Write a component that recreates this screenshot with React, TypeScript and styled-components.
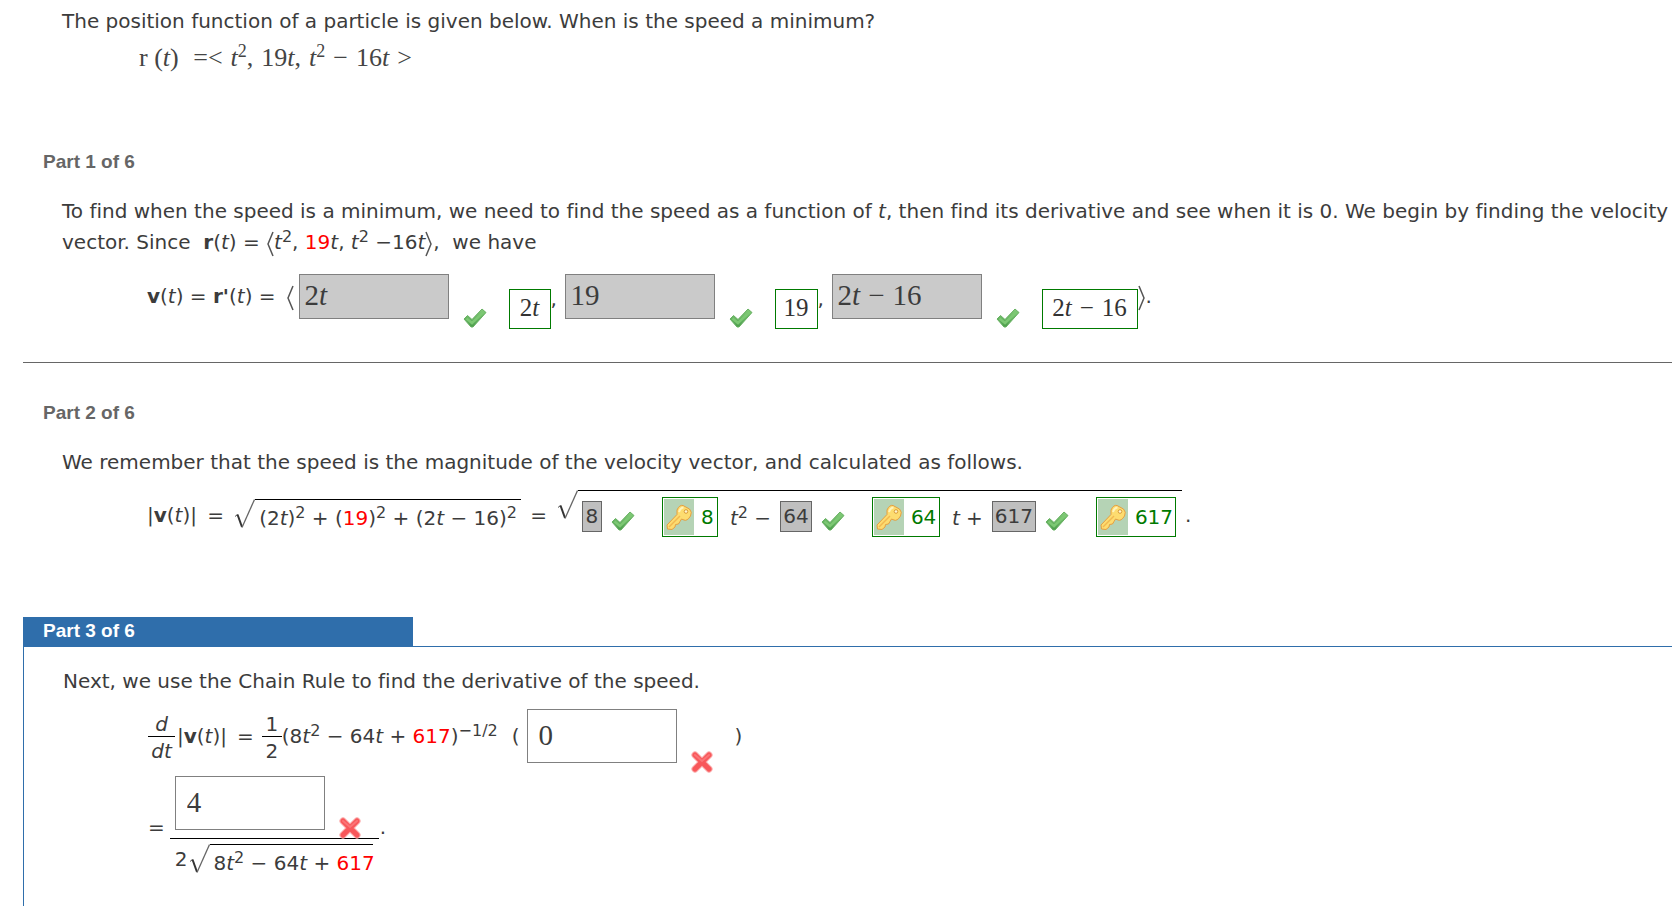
import React from "react";
import styled, { createGlobalStyle } from "styled-components";

const sans = '"DejaVu Sans", Verdana, sans-serif';
const serif = '"Liberation Serif", "Times New Roman", serif';
const ink = "#3c3c3c";

const GlobalStyle = createGlobalStyle`
  * { box-sizing: border-box; }
  body { margin: 0; background: #fff; color: ${ink}; font: 20px/30px ${sans}; font-variant-ligatures: none; }
`;

const Page = styled.main`
  min-height: 100vh;
  overflow-x: hidden;
`;

const Intro = styled.header`
  min-height: 134px;
  padding: 6px 24px 0 62px;
`;

const Given = styled.div`
  margin-top: 7px;
  padding-left: 77px;
  color: #444;
  font: 26px/30px ${serif};
  white-space: pre;
`;

const DoneSection = styled.section<{ $height: number; $ruled?: boolean }>`
  min-height: ${(p) => p.$height}px;
  margin-left: 23px;
  padding: ${(p) => (p.$ruled ? 13 : 35)}px 0 0 20px;
  border-bottom: ${(p) => (p.$ruled ? "1px solid #666" : "none")};
`;

const Heading = styled.h2`
  margin: 0;
  color: #666;
  font: bold 19px/30px "Liberation Sans", Arial, sans-serif;
`;

const Paragraph = styled.p`
  margin: 0;
  padding: 19px 0 0 19px;
  line-height: 31px;
`;

const Row = styled.div<{ $top: number }>`
  display: flex;
  align-items: flex-start;
  padding: ${(p) => p.$top}px 0 0 104px;
  white-space: pre;
`;

const Part = styled.span<{ $top?: number; $gap?: number; $width?: number }>`
  margin-top: ${(p) => p.$top ?? 0}px;
  margin-left: ${(p) => p.$gap ?? 0}px;
  width: ${(p) => (p.$width ? `${p.$width}px` : "auto")};
  white-space: pre;
  flex: none;
`;

const Red = styled.span`
  color: #f00;
`;

const Sup = styled.sup`
  font-size: 16px;
  line-height: 0;
  vertical-align: 7px;
`;

const SerifSup = styled(Sup)`
  font-size: 18px;
  vertical-align: 9px;
`;

const Op = styled.span`
  margin: 0 8px;
`;

const Comma = styled.span`
  margin-right: 8px;
`;

const MathEntry = styled.output`
  display: block;
  flex: none;
  width: 150px;
  height: 45px;
  padding: 0 5px;
  border: 1px solid #808080;
  background: #cacaca;
  font: 29px/40px ${serif};
`;

const MathInput = styled.input`
  display: block;
  flex: none;
  width: 150px;
  height: 54px;
  padding: 0 11px 2px;
  border: 1px solid #808080;
  border-radius: 0;
  background: #fff;
  color: ${ink};
  font: 29px/50px ${serif};
`;

const KeyBox = styled.span<{ $width: number }>`
  display: flex;
  flex: none;
  justify-content: center;
  width: ${(p) => p.$width}px;
  height: 40px;
  border: 1px solid #007a00;
  color: #333;
  font: 25px/36px ${serif};
`;

const NumberEntry = styled.output<{ $width: number }>`
  display: block;
  flex: none;
  width: ${(p) => p.$width}px;
  height: 31px;
  border: 1px solid #666;
  background: #bfbfbf;
  line-height: 29px;
  text-align: center;
`;

const KeyAnswer = styled.span<{ $width: number }>`
  display: flex;
  flex: none;
  width: ${(p) => p.$width}px;
  height: 40px;
  padding: 1px;
  border: 1px solid #007a00;
  color: #007a00;
  line-height: 36px;
`;

const KeyPanel = styled.span`
  display: flex;
  align-items: center;
  justify-content: center;
  width: 30px;
  margin-right: 7px;
  background: #b5d3b5;
`;

const Mark = styled.span<{ $top: number; $left: number; $right: number }>`
  display: block;
  flex: none;
  margin: ${(p) => `${p.$top}px ${p.$right}px 0 ${p.$left}px`};
  line-height: 0;
`;

const Root = styled.span<{ $top?: number; $gap?: number }>`
  display: flex;
  flex: none;
  margin-top: ${(p) => p.$top ?? 0}px;
  margin-left: ${(p) => p.$gap ?? 0}px;
`;

const Radicand = styled.span<{ $width: number }>`
  display: flex;
  align-items: flex-start;
  width: ${(p) => p.$width}px;
  border-top: 1px solid #000;
  white-space: pre;
`;

const Fraction = styled.span<{ $width: number }>`
  display: flex;
  flex: none;
  flex-direction: column;
  width: ${(p) => p.$width}px;
  padding-top: 4px;
  text-align: center;
  line-height: 28px;
`;

const Numerator = styled.span`
  border-bottom: 1px solid #000;
  line-height: 23px;
`;

const ActiveSection = styled.section`
  margin-left: 23px;
`;

const Tab = styled.h2`
  width: 390px;
  height: 29px;
  margin: 0;
  padding-left: 20px;
  background: #2f6eab;
  color: #fff;
  font: bold 19px/28px "Liberation Sans", Arial, sans-serif;
`;

const ActiveBody = styled.div`
  min-height: 260px;
  padding: 19px 0 0 20px;
  border-top: 1px solid #2f6eab;
  border-left: 1px solid #2f6eab;
`;

const FlushParagraph = styled(Paragraph)`
  padding-top: 0;
`;

const Quotient = styled.span`
  display: flex;
  flex: none;
  flex-direction: column;
  width: 209px;
  margin-left: 5px;
`;

const QuotientTop = styled.span`
  display: flex;
  height: 63px;
  padding-left: 5px;
  border-bottom: 1px solid #000;
`;

const QuotientBottom = styled.span`
  display: flex;
  padding: 5px 0 0 5px;
`;

function Check() {
  return (
    <svg width="24" height="20" viewBox="0 0 24 20" role="img" aria-label="Correct">
      <defs>
        <linearGradient id="check" x1="0" y1="0" x2="0" y2="1">
          <stop offset="0" stopColor="#86cc7c" />
          <stop offset="1" stopColor="#4a9c4b" />
        </linearGradient>
      </defs>
      <path d="M1 11 L4.500 7.500 L9 11.500 L19 1 L23 4.500 L10 19 L8 19 Z" fill="url(#check)" stroke="#68b262" strokeWidth="1" strokeLinejoin="round" />
      <path d="M3.500 10.500 L9 15 L20.500 4" fill="none" stroke="#7cc873" strokeWidth="2.500" />
    </svg>
  );
}

function Cross() {
  return (
    <svg width="22" height="22" viewBox="0 0 22 22" role="img" aria-label="Incorrect">
      <path d="M4 4 L18 18 M18 4 L4 18" stroke="#fba5a5" strokeWidth="7" strokeLinecap="round" />
      <path d="M4 4 L18 18 M18 4 L4 18" stroke="#f8575a" strokeWidth="5" strokeLinecap="round" />
      <path d="M4 4 L11 10 L18 4" fill="none" stroke="#fb7476" strokeWidth="2" strokeLinecap="round" />
    </svg>
  );
}

function KeyIcon() {
  return (
    <svg width="26" height="26" viewBox="0 0 26 26" aria-hidden="true">
      <path
        d="M11 6 Q13.500 0.500 17 1.500 L23.500 5 Q26.500 8 24.500 12 Q21 17.500 18 16 L15.500 15 L14 17.500 L12.500 20 L9.500 20.500 L9 23 L6 25.500 L1.500 25 L1 21 L11 10.500 Z"
        fill="#fddc70" stroke="#e59f40" strokeWidth="1" strokeLinejoin="round"
      />
      <path d="M3 23 L14 12" stroke="#f2b850" strokeWidth="1.500" />
      <path d="M13 8 Q14.500 3.500 17.500 3.500" fill="none" stroke="#fff3bd" strokeWidth="2" />
      <circle cx="20" cy="7.500" r="1.800" fill="#fff6d0" stroke="#d99a38" strokeWidth="1" />
    </svg>
  );
}

function Radical() {
  return (
    <svg width="21" height="30" viewBox="0 0 21 30" aria-hidden="true">
      <path d="M1 17.500 L3.500 15.500" fill="none" stroke="#555" strokeWidth="1" />
      <path d="M3.500 15.500 L8 28" fill="none" stroke="#333" strokeWidth="2" />
      <path d="M8 28.500 L20.500 0.500" fill="none" stroke="#666" strokeWidth="1.300" />
    </svg>
  );
}

function Angle({ close }: { close?: boolean }) {
  return (
    <svg width="8" height="26" viewBox="0 0 8 26" aria-hidden="true">
      <path d={close ? "M1 1 L6 13 L1 25" : "M7 1 L2 13 L7 25"} fill="none" stroke="#555" strokeWidth="1.500" />
    </svg>
  );
}

const InlineAngle = styled.span`
  display: inline-block;
  width: 8px;
  height: 26px;
  line-height: 0;
  vertical-align: -8px;
`;

export default function App() {
  return (
    <Page>
      <GlobalStyle />
      <Intro>
        <div>The position function of a particle is given below. When is the speed a minimum?</div>
        <Given>
          r (<i>t</i>) <Op>=&lt;</Op><i>t</i><SerifSup>2</SerifSup><Comma>,</Comma>19<i>t</i><Comma>,</Comma><i>t</i><SerifSup>2</SerifSup><Op>−</Op>16<i>t</i><Op>&gt;</Op>
        </Given>
      </Intro>

      <DoneSection $height={229} $ruled>
        <Heading>Part 1 of 6</Heading>
        <Paragraph>
          To find when the speed is a minimum, we need to find the speed as a function of <i>t</i>, then find its
          derivative and see when it is 0. We begin by finding the velocity vector. Since&nbsp; <b>r</b>(<i>t</i>) ={" "}
          <InlineAngle><Angle /></InlineAngle><i>t</i><Sup>2</Sup>, <Red>19</Red><i>t</i>, <i>t</i><Sup>2</Sup> −16<i>t</i>
          <InlineAngle><Angle close /></InlineAngle>,&nbsp; we have
        </Paragraph>
        <Row $top={16}>
          <Part $top={7}><b>v</b>(<i>t</i>) = <b>r'</b>(<i>t</i>) =</Part>
          <Part $top={11} $gap={10} $width={13}><Angle /></Part>
          <MathEntry>2<i>t</i></MathEntry>
          <Mark $top={34} $left={14} $right={22}><Check /></Mark>
          <Part $top={15}><KeyBox $width={42}><span>2<i>t</i></span></KeyBox></Part>
          <Part $top={10} $width={14}>,</Part>
          <MathEntry>19</MathEntry>
          <Mark $top={34} $left={14} $right={22}><Check /></Mark>
          <Part $top={15}><KeyBox $width={43}>19</KeyBox></Part>
          <Part $top={10} $width={14}>,</Part>
          <MathEntry>2<i>t</i><Op>−</Op>16</MathEntry>
          <Mark $top={34} $left={14} $right={22}><Check /></Mark>
          <Part $top={15}><KeyBox $width={96}><span>2<i>t</i><Op>−</Op>16</span></KeyBox></Part>
          <Part $top={11}><Angle close /></Part>
          <Part $top={7}>.</Part>
        </Row>
      </DoneSection>

      <DoneSection $height={254}>
        <Heading>Part 2 of 6</Heading>
        <Paragraph>We remember that the speed is the magnitude of the velocity vector, and calculated as follows.</Paragraph>
        <Row $top={12}>
          <Part $top={10}>|<b>v</b>(<i>t</i>)| </Part>
          <Part $top={10} $gap={4}>=</Part>
          <Root $top={9} $gap={10}>
            <Radical />
            <Radicand $width={266}>
              <Part $top={3} $gap={4}>(2<i>t</i>)<Sup>2</Sup> + (<Red>19</Red>)<Sup>2</Sup> + (2<i>t</i> − 16)<Sup>2</Sup></Part>
            </Radicand>
          </Root>
          <Part $top={10} $gap={9}>=</Part>
          <Root $gap={10}>
            <Radical />
            <Radicand $width={604}>
              <Part $top={10} $gap={4}><NumberEntry $width={20}>8</NumberEntry></Part>
              <Mark $top={20} $left={9} $right={27}><Check /></Mark>
              <Part $top={6}><KeyAnswer $width={56}><KeyPanel><KeyIcon /></KeyPanel>8</KeyAnswer></Part>
              <Part $top={12} $gap={12} $width={50}><i>t</i><Sup>2</Sup> −</Part>
              <Part $top={10}><NumberEntry $width={32}>64</NumberEntry></Part>
              <Mark $top={20} $left={9} $right={27}><Check /></Mark>
              <Part $top={6}><KeyAnswer $width={68}><KeyPanel><KeyIcon /></KeyPanel>64</KeyAnswer></Part>
              <Part $top={12} $gap={12} $width={40}><i>t</i> +</Part>
              <Part $top={10}><NumberEntry $width={44}>617</NumberEntry></Part>
              <Mark $top={20} $left={9} $right={27}><Check /></Mark>
              <Part $top={6}><KeyAnswer $width={80}><KeyPanel><KeyIcon /></KeyPanel>617</KeyAnswer></Part>
            </Radicand>
          </Root>
          <Part $top={10} $gap={3}>.</Part>
        </Row>
      </DoneSection>

      <ActiveSection>
        <Tab>Part 3 of 6</Tab>
        <ActiveBody>
          <FlushParagraph>Next, we use the Chain Rule to find the derivative of the speed.</FlushParagraph>
          <Row $top={12}>
            <Fraction $width={27}><Numerator><i>d</i></Numerator><i>dt</i></Fraction>
            <Part $top={12} $gap={2}>|<b>v</b>(<i>t</i>)|</Part>
            <Part $top={12} $gap={10}>=</Part>
            <Part $gap={8}><Fraction $width={20}><Numerator>1</Numerator>2</Fraction></Part>
            <Part $top={12}>(8<i>t</i><Sup>2</Sup> − 64<i>t</i> + <Red>617</Red>)<Sup>−1/2</Sup></Part>
            <Part $top={12} $gap={14}>(</Part>
            <Part $gap={7}><MathInput aria-label="Derivative of the radicand" defaultValue="0" /></Part>
            <Mark $top={42} $left={14} $right={22}><Cross /></Mark>
            <Part $top={12}>)</Part>
          </Row>
          <Row $top={3}>
            <Part $top={36}>=</Part>
            <Quotient>
              <QuotientTop>
                <MathInput aria-label="Numerator" defaultValue="4" />
                <Mark $top={41} $left={14} $right={0}><Cross /></Mark>
              </QuotientTop>
              <QuotientBottom>
                <Part>2</Part>
                <Root $gap={1}>
                  <Radical />
                  <Radicand $width={163}>
                    <Part $top={3} $gap={4}>8<i>t</i><Sup>2</Sup> − 64<i>t</i> + <Red>617</Red></Part>
                  </Radicand>
                </Root>
              </QuotientBottom>
            </Quotient>
            <Part $top={36} $gap={1}>.</Part>
          </Row>
        </ActiveBody>
      </ActiveSection>
    </Page>
  );
}
